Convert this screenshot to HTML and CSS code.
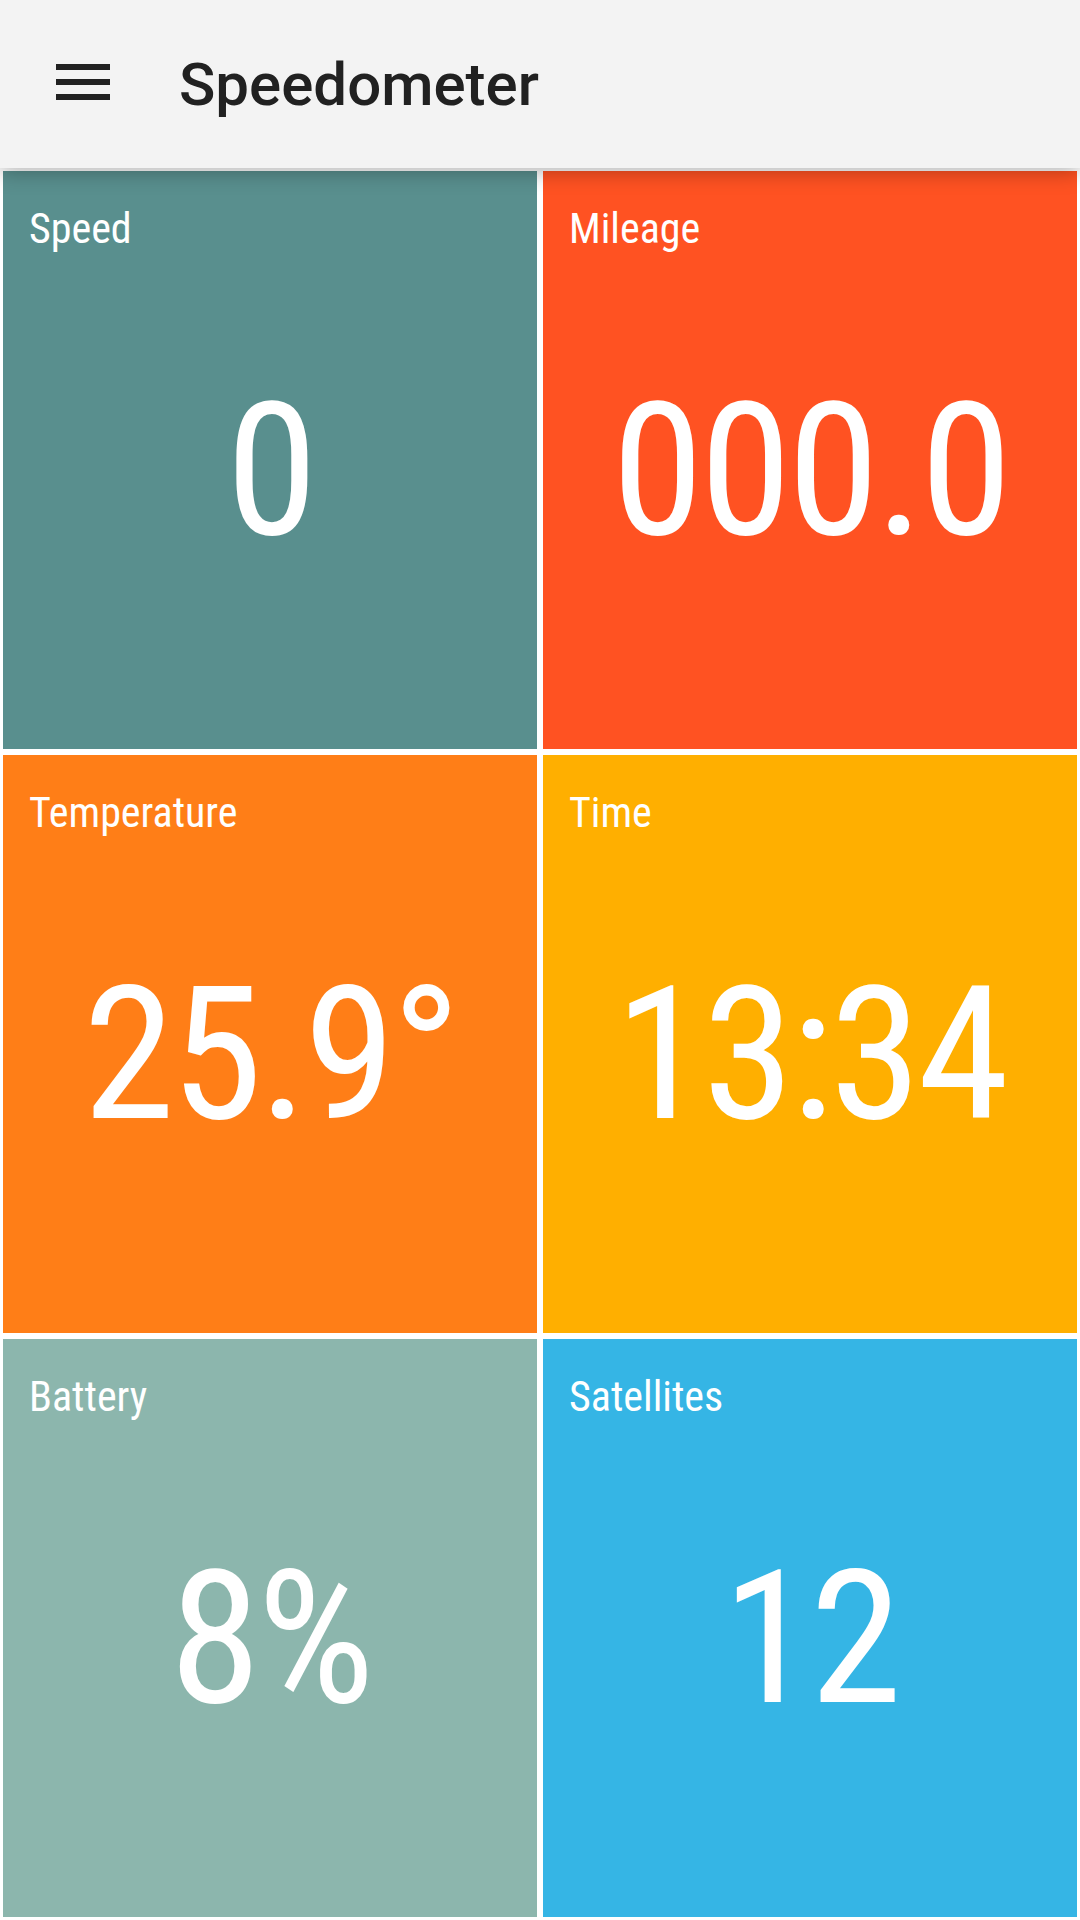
FILE: index.html
```html
<!DOCTYPE html>
<html>
<head>
	<meta charset="utf-8">
	<title>Speedometer</title>
	<link rel="stylesheet" href="styles.css">
</head>
<body>
<header class="toolbar">
	<svg class="menu-icon" viewBox="0 0 24 24" width="72" height="72">
		<path d="M3 18h18v-2H3v2zm0-5h18v-2H3v2zm0-7v2h18V6H3z" fill="#212121"/>
	</svg>
	<h1 class="title">Speedometer</h1>
</header>
<!-- 六个数据块，两列三行 -->
<main class="tiles">
	<div class="tile speed">
		<div class="label">Speed</div>
		<div class="value">0</div>
	</div>
	<div class="tile mileage">
		<div class="label">Mileage</div>
		<div class="value">000.0</div>
	</div>
	<div class="tile temperature">
		<div class="label">Temperature</div>
		<div class="value">25.9°</div>
	</div>
	<div class="tile time">
		<div class="label">Time</div>
		<div class="value">13:34</div>
	</div>
	<div class="tile battery">
		<div class="label">Battery</div>
		<div class="value">8%</div>
	</div>
	<div class="tile satellites">
		<div class="label">Satellites</div>
		<div class="value">12</div>
	</div>
</main>
</body>
</html>
```

FILE: styles.css
```css
*{
	box-sizing: border-box;
}
body{
	margin: 0;
	background-color: white;
	font-family: Roboto, "Liberation Sans", sans-serif;
}
.toolbar{
	position: relative;
	z-index: 1;
	height: 168px;
	display: flex;
	align-items: center;
	padding-left: 47px;
	background-color: #f3f3f3;
	box-shadow: 0 4px 20px rgba(0,0,0,0.3);
}
.menu-icon{
	display: block;
	margin-top: -4px;
}
.title{
	margin: 0 0 0 60px;
	font-size: 60px;
	font-weight: 500;
	color: #212121;
}
.tiles{
	height: 1752px;
	padding: 3px;
	display: grid;
	grid-template-columns: 1fr 1fr;
	grid-template-rows: 1fr 1fr 1fr;
	gap: 6px;
}
.tile{
	display: flex;
	flex-direction: column;
	color: white;
	font-stretch: 75%;
}
.label{
	padding: 33px 0 0 26px;
	font-size: 42px;
	line-height: 49px;
}
.value{
	flex: 1;
	display: flex;
	align-items: center;
	justify-content: center;
	padding-bottom: 63px;
	font-size: 186px;
	line-height: 1;
	letter-spacing: -4px;
}
.speed{
	background-color: #598f8e;
}
.mileage{
	background-color: #ff5222;
}
.temperature{
	background-color: #ff7e17;
}
.time{
	background-color: #ffaf00;
}
.battery{
	background-color: #8cb6ad;
}
.satellites{
	background-color: #35b5e5;
}
```
